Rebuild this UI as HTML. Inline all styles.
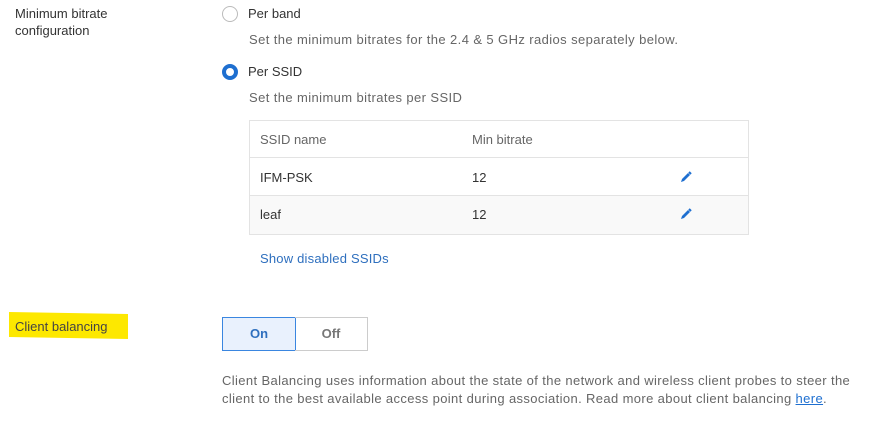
<!DOCTYPE html>
<html><head><style>
body{margin:0;width:885px;height:438px;background:#fff;font-family:"Liberation Sans",sans-serif;font-size:13px;color:#333;position:relative;overflow:hidden}
.a{position:absolute;white-space:nowrap}
.g{color:#666}
.radio{position:absolute;width:14px;height:14px;border:1px solid #bbb;border-radius:50%;background:#fff}
.radio.on{border:4px solid #1e6fd0;width:8px;height:8px}
.tbl{position:absolute;left:249px;top:120px;width:498px;height:113px;border:1px solid #e3e3e3;overflow:hidden}
.row{position:absolute;left:0;right:0;border-top:1px solid #e3e3e3}
</style></head><body>
<div class="a" style="left:15px;top:5px;line-height:17px">Minimum bitrate<br>configuration</div>
<div class="radio" style="left:222px;top:6px"></div>
<div class="a" style="left:248px;top:6px">Per band</div>
<div class="a g" style="left:249px;top:32px;letter-spacing:0.4px">Set the minimum bitrates for the 2.4 &amp; 5 GHz radios separately below.</div>
<div class="radio on" style="left:222px;top:64px"></div>
<div class="a" style="left:248px;top:64px">Per SSID</div>
<div class="a g" style="left:249px;top:90px;letter-spacing:0.4px">Set the minimum bitrates per SSID</div>
<div class="tbl">
<div class="a g" style="left:10px;top:11px">SSID name</div>
<div class="a g" style="left:222px;top:11px">Min bitrate</div>
<div class="row" style="top:36px;height:38px"></div>
<div class="a" style="left:10px;top:49px">IFM-PSK</div>
<div class="a" style="left:222px;top:49px">12</div>
<div class="row" style="top:74px;bottom:0;background:#f9f9f9"></div>
<div class="a" style="left:10px;top:86px">leaf</div>
<div class="a" style="left:222px;top:86px">12</div>
<svg class="a" style="left:430px;top:50px" width="12" height="12" viewBox="0 0 12 12"><path d="M1 11 L2 8 L8 2 L10 4 L4 10 Z" fill="#1e6fd0"/><path d="M9 1 L11 3" stroke="#1e6fd0" stroke-width="2"/></svg>
<svg class="a" style="left:430px;top:87px" width="12" height="12" viewBox="0 0 12 12"><path d="M1 11 L2 8 L8 2 L10 4 L4 10 Z" fill="#1e6fd0"/><path d="M9 1 L11 3" stroke="#1e6fd0" stroke-width="2"/></svg>
</div>
<div class="a" style="left:260px;top:251px;color:#2e6fbe;letter-spacing:0.2px">Show disabled SSIDs</div>
<div class="a" style="left:9px;top:313px;width:119px;height:25px;background:#fde800;transform:skewY(1deg)"></div>
<div class="a" style="left:15px;top:319px;color:#444">Client balancing</div>
<div class="a" style="left:222px;top:317px;width:72px;height:32px;border:1px solid #3a86e0;background:#e9f1fd;color:#2e6fbe;font-weight:bold;text-align:center;line-height:32px">On</div>
<div class="a" style="left:295px;top:317px;width:72px;height:32px;border:1px solid #ccc;border-left:none;color:#777;font-weight:bold;text-align:center;line-height:32px">Off</div>
<div class="a g" style="left:222px;top:372px;line-height:18px;letter-spacing:0.37px">Client Balancing uses information about the state of the network and wireless client probes to steer the<br>client to the best available access point during association. Read more about client balancing <span style="color:#1e6fd0;text-decoration:underline">here</span>.</div>
</body></html>
